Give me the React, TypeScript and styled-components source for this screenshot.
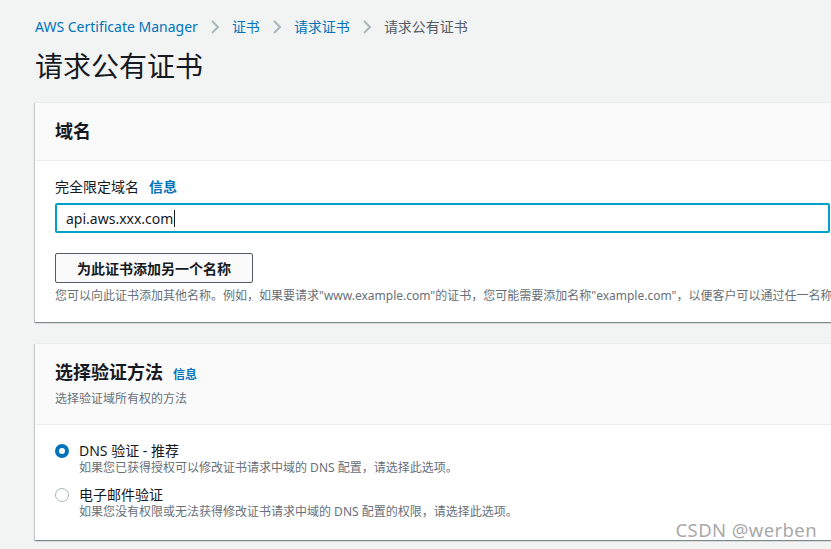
import styled, { createGlobalStyle } from 'styled-components';

const GlobalStyle = createGlobalStyle`
  html, body {
    margin: 0;
    padding: 0;
    overflow: hidden;
    background: #f2f3f3;
  }
  body {
    font-family: "Noto Sans", "Noto Sans CJK SC", sans-serif;
    color: #16191f;
  }
`;

const Page = styled.div`
  position: relative;
  width: 831px;
  height: 549px;
  padding: 17px 0 0 35px;
  box-sizing: border-box;
  overflow: hidden;
`;

const Breadcrumbs = styled.nav`
  display: flex;
  align-items: center;
  gap: 12px;
  height: 20px;
  font-size: 14px;
  line-height: 20px;
`;

const Crumb = styled.a<{ $current?: boolean }>`
  color: ${({ $current }) => ($current ? '#545b64' : '#0073bb')};
  text-decoration: none;
`;

const Chevron = () => (
  <svg width="10" height="16" viewBox="0 0 10 16" fill="none">
    <path d="M2 2l6 6-6 6" stroke="#aab7b8" strokeWidth="2" />
  </svg>
);

const Title = styled.h1`
  margin: 11px 0 18px;
  font-size: 28px;
  line-height: 36px;
  font-weight: 400;
`;

const Card = styled.section`
  width: 900px;
  background: #fff;
  border-top: 1px solid #eaeded;
  box-shadow: 0 1px 1px 0 rgba(0, 28, 36, 0.3), 1px 1px 1px 0 rgba(0, 28, 36, 0.15),
    -1px 1px 1px 0 rgba(0, 28, 36, 0.15);
  margin-bottom: 21px;
`;

const CardHeader = styled.header`
  background: #fafafa;
  border-bottom: 1px solid #eaeded;
  padding: 17px 20px 18px;
`;

const CardTitle = styled.h2`
  display: flex;
  align-items: baseline;
  gap: 10px;
  margin: 0;
  font-size: 18px;
  line-height: 22px;
  font-weight: 700;
`;

const InfoLink = styled.a<{ $small?: boolean }>`
  color: #0073bb;
  font-weight: 700;
  font-size: ${({ $small }) => ($small ? '12px' : '14px')};
  text-decoration: none;
`;

const Subtitle = styled.p`
  margin: 5px 0 -1px;
  font-size: 12px;
  line-height: 16px;
  color: #687078;
`;

const CardBody = styled.div<{ $bottom?: number }>`
  padding: 18px 20px ${({ $bottom }) => $bottom ?? 18}px;
`;

const Label = styled.label`
  display: flex;
  gap: 10px;
  font-size: 14px;
  line-height: 16px;
`;

const Input = styled.div`
  display: flex;
  align-items: center;
  width: 775px;
  height: 30px;
  margin-top: 8px;
  box-sizing: border-box;
  border: 2px solid #00a1c9;
  border-radius: 2px;
  padding: 0 9px;
  font-size: 14px;
`;

const Caret = styled.span`
  display: inline-block;
  width: 1px;
  height: 17px;
  background: #16191f;
  margin-left: 1px;
`;

const Button = styled.button`
  display: block;
  height: 30px;
  margin-top: 20px;
  padding: 0 21px;
  border: 1px solid #545b64;
  border-radius: 2px;
  background: #fafafa;
  color: #16191f;
  font-family: inherit;
  font-size: 14px;
  font-weight: 700;
`;

const Hint = styled.p`
  margin: 5px 0 0;
  font-size: 12px;
  line-height: 16px;
  color: #687078;
  white-space: nowrap;
`;

const Option = styled.div<{ $gap?: number }>`
  display: grid;
  grid-template-columns: 14px 1fr;
  column-gap: 10px;
  margin-top: ${({ $gap }) => $gap ?? 0}px;
`;

const Radio = styled.span<{ $checked?: boolean }>`
  width: 14px;
  height: 14px;
  margin-top: 1px;
  box-sizing: border-box;
  border-radius: 50%;
  border: ${({ $checked }) => ($checked ? '4px solid #0073bb' : '1px solid #aab7b8')};
  background: #fff;
`;

const OptionLabel = styled.div`
  font-size: 14px;
  line-height: 16px;
`;

const OptionDesc = styled.div`
  grid-column: 2;
  margin-top: 1px;
  font-size: 12px;
  line-height: 16px;
  color: #687078;
`;

const Watermark = styled.div`
  position: absolute;
  right: 14px;
  bottom: 7px;
  font-size: 18.5px;
  color: #a9a9a9;
  text-shadow: 0 0 2px #fff, 0 0 2px #fff;
  letter-spacing: 0.4px;
`;

export default function App() {
  return (
    <>
      <GlobalStyle />
      <Page>
        <Breadcrumbs>
          <Crumb href="#">AWS Certificate Manager</Crumb>
          <Chevron />
          <Crumb href="#">证书</Crumb>
          <Chevron />
          <Crumb href="#">请求证书</Crumb>
          <Chevron />
          <Crumb $current>请求公有证书</Crumb>
        </Breadcrumbs>
        <Title>请求公有证书</Title>

        <Card>
          <CardHeader>
            <CardTitle>域名</CardTitle>
          </CardHeader>
          <CardBody>
            <Label>
              完全限定域名 <InfoLink href="#">信息</InfoLink>
            </Label>
            <Input>
              api.aws.xxx.com
              <Caret />
            </Input>
            <Button>为此证书添加另一个名称</Button>
            <Hint>
              您可以向此证书添加其他名称。例如，如果要请求"www.example.com"的证书，您可能需要添加名称"example.com"，以便客户可以通过任一名称访问您的网站。
            </Hint>
          </CardBody>
        </Card>

        <Card>
          <CardHeader>
            <CardTitle>
              选择验证方法 <InfoLink $small href="#">信息</InfoLink>
            </CardTitle>
            <Subtitle>选择验证域所有权的方法</Subtitle>
          </CardHeader>
          <CardBody $bottom={20}>
            <Option>
              <Radio $checked />
              <OptionLabel>DNS 验证 - 推荐</OptionLabel>
              <OptionDesc>如果您已获得授权可以修改证书请求中域的 DNS 配置，请选择此选项。</OptionDesc>
            </Option>
            <Option $gap={11}>
              <Radio />
              <OptionLabel>电子邮件验证</OptionLabel>
              <OptionDesc>如果您没有权限或无法获得修改证书请求中域的 DNS 配置的权限，请选择此选项。</OptionDesc>
            </Option>
          </CardBody>
        </Card>
        <Watermark>CSDN @werben</Watermark>
      </Page>
    </>
  );
}
